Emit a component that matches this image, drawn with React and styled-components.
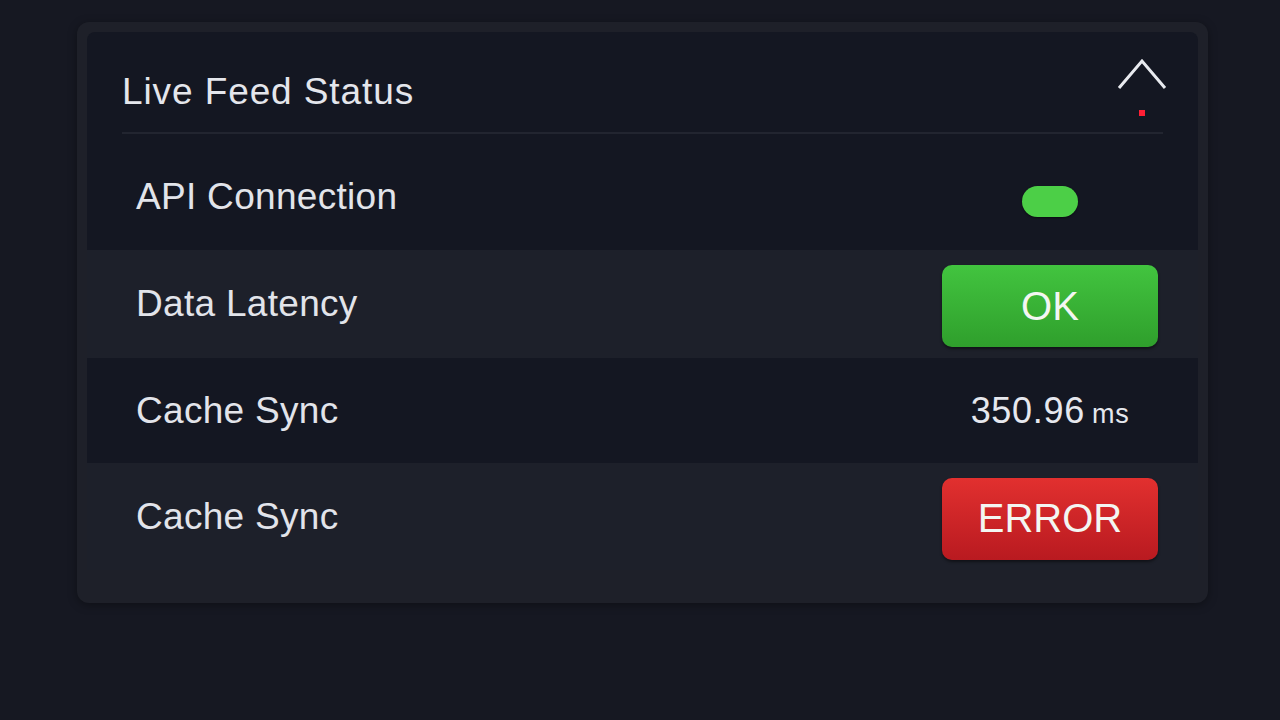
import React from "react";
import styled, { createGlobalStyle } from "styled-components";

const GlobalStyle = createGlobalStyle`
  html, body {
    margin: 0;
    padding: 0;
    background: #161822;
    font-family: "Liberation Sans", Arial, sans-serif;
  }
`;

const Page = styled.div`
  width: 1280px;
  height: 720px;
  padding: 22px 72px 0 77px;
  box-sizing: border-box;
`;

const Card = styled.div`
  width: 1131px;
  box-sizing: border-box;
  background: #1e2029;
  border-radius: 12px;
  padding: 10px 10px 8px;
  box-shadow: 0 2px 10px rgba(0, 0, 0, 0.35);
`;

const Inner = styled.div`
  background: #141722;
  border-radius: 8px 8px 0 0;
  display: flex;
  flex-direction: column;
`;

const Header = styled.div`
  display: flex;
  align-items: center;
  justify-content: space-between;
  margin: 0 35px;
  height: 102px;
  border-bottom: 2px solid #222530;
  box-sizing: border-box;
`;

const Title = styled.span`
  font-size: 37px;
  letter-spacing: 0.9px;
  color: #e4e6ec;
  padding-top: 20px;
`;

const Toggle = styled.div`
  position: relative;
  align-self: flex-start;
  width: 50px;
  padding-top: 26px;
  display: flex;
  justify-content: center;
  margin-right: -4px;
`;

const Dot = styled.span`
  position: absolute;
  left: 22px;
  top: 78px;
  width: 6px;
  height: 6px;
  background: #ff1f35;
`;

const Row = styled.div`
  display: flex;
  align-items: center;
  justify-content: space-between;
  box-sizing: border-box;
  height: ${p => p.h}px;
  padding: ${p => p.top || 0}px 40px 0 49px;
  background: ${p => (p.alt ? "#1d202a" : "#141722")};
`;

const Label = styled.span`
  font-size: 37px;
  letter-spacing: 0.3px;
  color: #e2e4ea;
`;

const Slot = styled.div`
  width: 216px;
  display: flex;
  justify-content: center;
`;

const Pill = styled.span`
  width: 56px;
  height: 31px;
  margin-top: 8px;
  border-radius: 16px;
  background: #4ccf47;
  box-shadow: 0 1px 2px rgba(0, 0, 0, 0.5);
`;

const Badge = styled.div`
  width: 216px;
  height: 82px;
  margin-top: 4px;
  border-radius: 10px;
  display: flex;
  align-items: center;
  justify-content: center;
  font-size: 40px;
  color: #f3f6f2;
  background: ${p =>
    p.tone === "ok"
      ? "linear-gradient(#42c43f, #2f9f2c)"
      : "linear-gradient(#e2302f, #b91a20)"};
  box-shadow: 0 2px 3px rgba(0, 0, 0, 0.45);
`;

const Value = styled.span`
  font-size: 36px;
  color: #e6e8ee;
  letter-spacing: 0.7px;
  small {
    font-size: 27px;
    margin-left: 7px;
  }
`;

const Bottom = styled.div`
  height: 25px;
  background: #1e2029;
`;

export default function App() {
  return (
    <>
      <GlobalStyle />
      <Page>
        <Card>
          <Inner>
            <Header>
              <Title>Live Feed Status</Title>
              <Toggle>
                <svg width="50" height="32" viewBox="0 0 50 32">
                  <polyline
                    points="2,30 25,3 48,30"
                    fill="none"
                    stroke="#e8eaef"
                    strokeWidth="3"
                  />
                </svg>
                <Dot />
              </Toggle>
            </Header>
            <Row h={116} top={10}>
              <Label>API Connection</Label>
              <Slot>
                <Pill />
              </Slot>
            </Row>
            <Row h={108} alt>
              <Label>Data Latency</Label>
              <Badge tone="ok">OK</Badge>
            </Row>
            <Row h={105}>
              <Label>Cache Sync</Label>
              <Slot>
                <Value>
                  350.96<small>ms</small>
                </Value>
              </Slot>
            </Row>
            <Row h={107} alt>
              <Label>Cache Sync</Label>
              <Badge tone="error">ERROR</Badge>
            </Row>
          </Inner>
          <Bottom />
        </Card>
      </Page>
    </>
  );
}
